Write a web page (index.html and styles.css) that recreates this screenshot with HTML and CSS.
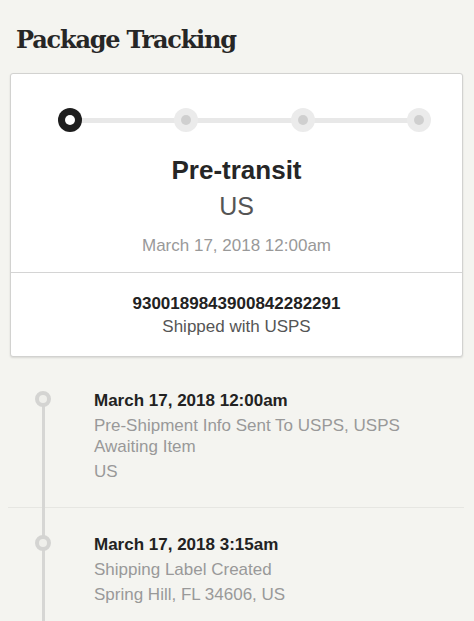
FILE: index.html
```html
<!DOCTYPE html>
<html lang="en">
<head>
    <meta charset="UTF-8">
    <meta name="viewport" content="width=device-width, initial-scale=1.0">
    <title>Package Tracking</title>
    <link rel="stylesheet" href="styles.css">
</head>
<body>

    <!-- Header -->
    <h1 class="page-title">Package Tracking</h1>

    <!-- Status Card -->
    <div class="card">
        <div class="card-main">
            <div class="stepper">
                <span class="step active"></span>
                <span class="step"></span>
                <span class="step"></span>
                <span class="step"></span>
            </div>
            <div class="status">Pre-transit</div>
            <div class="status-place">US</div>
            <div class="status-date">March 17, 2018 12:00am</div>
        </div>
        <div class="card-foot">
            <div class="tracking-no">9300189843900842282291</div>
            <div class="carrier">Shipped with USPS</div>
        </div>
    </div>

    <!-- History -->
    <ul class="timeline">
        <li class="event">
            <div class="event-date">March 17, 2018 12:00am</div>
            <div class="event-text">Pre-Shipment Info Sent To USPS, USPS Awaiting Item</div>
            <div class="event-text">US</div>
        </li>
        <li class="event">
            <div class="event-date">March 17, 2018 3:15am</div>
            <div class="event-text">Shipping Label Created</div>
            <div class="event-text">Spring Hill, FL 34606, US</div>
        </li>
    </ul>

</body>
</html>
```

FILE: styles.css
```css
/* Page */
body { margin: 0; background: #f4f4f0; font-family: "Liberation Sans", Arial, sans-serif; color: #222; }

.page-title { margin: 0; padding: 22px 16px 15px; font-family: "DejaVu Serif", Georgia, serif; font-size: 24px; font-weight: bold; line-height: 36px; color: #262626; letter-spacing: -1.2px; }

/* Status card */
.card { margin: 0 11px 0 10px; background: #fff; border: 1px solid #d2d2d0; border-radius: 3px; box-shadow: 0 1px 2px rgba(0,0,0,0.12); text-align: center; }
.card-main { padding: 34px 0 14px; border-bottom: 1px solid #d4d4d4; }

.stepper { position: relative; display: flex; justify-content: space-between; width: 373px; margin-left: 47px; }
.stepper::before { content: ""; position: absolute; left: 12px; right: 12px; top: 10px; height: 5px; background: #e8e8e8; }
.step { position: relative; width: 24px; height: 24px; border-radius: 50%; background: #ebebeb; }
.step::after { content: ""; position: absolute; left: 7px; top: 7px; width: 10px; height: 10px; border-radius: 50%; background: #cfcfcf; }
.step.active { background: #1e1e1e; }
.step.active::after { background: #fff; }

.status { margin-top: 22px; font-size: 26px; font-weight: bold; line-height: 32px; color: #262626; }
.status-place { margin-top: 3px; font-size: 25px; line-height: 34px; color: #555; }
.status-date { margin-top: 11px; font-size: 17px; line-height: 24px; color: #999; }

.card-foot { padding: 19px 0 18px; }
.tracking-no { font-size: 17px; font-weight: bold; line-height: 23px; color: #222; }
.carrier { font-size: 17px; line-height: 23px; color: #555; }

/* Timeline */
.timeline { list-style: none; margin: 7px 10px 0 8px; padding: 0; }
.event { position: relative; padding: 26px 10px 25px 86px; border-bottom: 1px solid #e6e6e2; }
.event::before { content: ""; position: absolute; left: 34px; top: 0; bottom: -1px; width: 3px; background: #d6d6d4; }
.event:first-child::before { top: 35px; }
.event::after { content: ""; position: absolute; left: 27px; top: 27px; width: 8px; height: 8px; border: 4px solid #d4d4d2; border-radius: 50%; background: #efefeb; }
.event-date { font-size: 17px; font-weight: bold; line-height: 21px; color: #222; }
.event-text { margin-top: 4px; font-size: 17px; line-height: 21px; color: #999; }
```
